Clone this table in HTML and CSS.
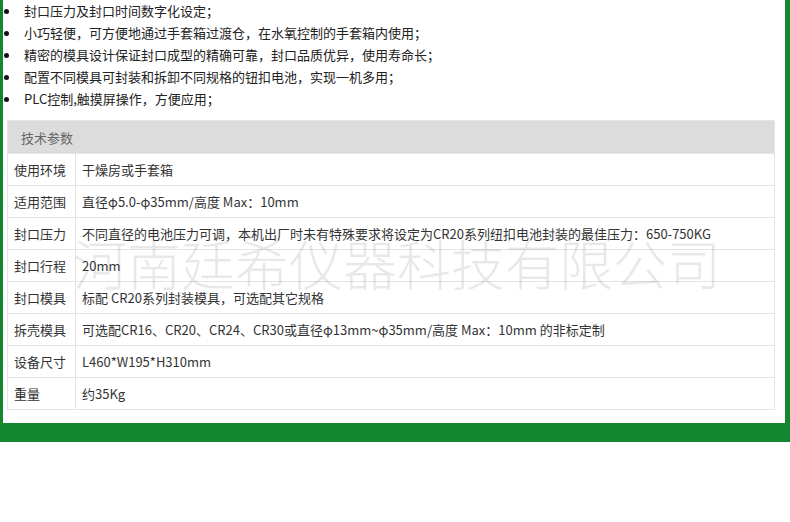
FILE: index.html
```html
<!DOCTYPE html>
<html lang="zh-CN">
<head>
  <meta charset="UTF-8" />
  <meta name="viewport" content="width=device-width, initial-scale=1.0" />
  <title>扣式电池封口机 技术参数</title>
  <link rel="stylesheet" href="styles.css">
</head>
<body>
  <div class="frame">
    <ul class="features">
      <li>封口压力及封口时间数字化设定；</li>
      <li>小巧轻便，可方便地通过手套箱过渡仓，在水氧控制的手套箱内使用；</li>
      <li>精密的模具设计保证封口成型的精确可靠，封口品质优异，使用寿命长；</li>
      <li>配置不同模具可封装和拆卸不同规格的钮扣电池，实现一机多用；</li>
      <li>PLC控制,触摸屏操作，方便应用；</li>
    </ul>

    <table class="specs">
      <tr>
        <th colspan="2">技术参数</th>
      </tr>
      <tr><td class="label">使用环境</td><td>干燥房或手套箱</td></tr>
      <tr><td class="label">适用范围</td><td>直径φ5.0-φ35mm/高度 Max：10mm</td></tr>
      <tr><td class="label">封口压力</td><td>不同直径的电池压力可调，本机出厂时未有特殊要求将设定为CR20系列纽扣电池封装的最佳压力：650-750KG</td></tr>
      <tr><td class="label">封口行程</td><td>20mm</td></tr>
      <tr><td class="label">封口模具</td><td>标配 CR20系列封装模具，可选配其它规格</td></tr>
      <tr><td class="label">拆壳模具</td><td>可选配CR16、CR20、CR24、CR30或直径φ13mm~φ35mm/高度 Max：10mm 的非标定制</td></tr>
      <tr><td class="label">设备尺寸</td><td>L460*W195*H310mm</td></tr>
      <tr><td class="label">重量</td><td>约35Kg</td></tr>
    </table>

    <div class="watermark">河南廷希仪器科技有限公司</div>
  </div>
</body>
</html>
```

FILE: styles.css
```css
body {
  margin: 0;
  background: #fff;
  font-family: "Microsoft YaHei", "Noto Sans CJK SC", "Noto Sans", sans-serif;
  font-size: 13px;
  color: #333;
}
.frame {
  position: relative;
  height: 423px;
  border: solid #13862f;
  border-width: 0 5px 19px 3px;
  padding: 0 10px 0 4px;
  overflow: hidden;
}
.features {
  list-style: none;
  margin: 0 0 10px -4px;
  padding: 0;
}
.features li {
  display: flex;
  align-items: center;
  height: 22px;
  line-height: 22px;
  color: #222;
}
.features li::before {
  content: "";
  width: 5px;
  height: 5px;
  border-radius: 50%;
  background: #111;
  margin: 0 15px 0 1px;
  flex-shrink: 0;
}
.specs {
  width: 100%;
  border-collapse: collapse;
  border: 1px solid #e4e4e4;
}
.specs th {
  background: #dcdcdc;
  color: #666;
  font-weight: normal;
  text-align: left;
  height: 32px;
  padding: 0 0 0 13px;
}
.specs td {
  height: 31px;
  border: 1px solid #e4e4e4;
  padding: 0 0 0 6px;
  white-space: nowrap;
}
.specs td.label {
  width: 61px;
}
.watermark {
  position: absolute;
  left: 70px;
  top: 236px;
  font-size: 54px;
  font-weight: 200;
  line-height: 1;
  color: rgba(0, 0, 0, 0.09);
  white-space: nowrap;
  pointer-events: none;
}
```
